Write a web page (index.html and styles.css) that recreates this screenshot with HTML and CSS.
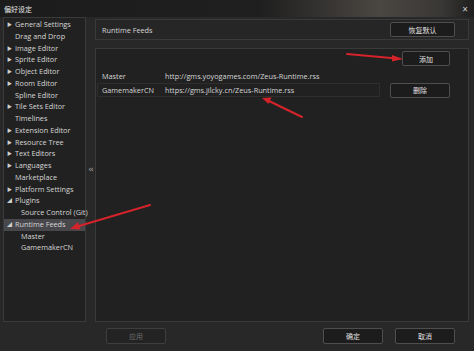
FILE: index.html
```html
<!DOCTYPE html>
<html lang="zh">
<head>
  <meta charset="UTF-8" />
  <title>偏好设定</title>
  <link rel="stylesheet" href="styles.css">
</head>
<body>
  <div class="window">
    <div class="titlebar">
      <span class="title">偏好设定</span>
      <span class="close">×</span>
    </div>

    <div class="main">
      <div class="sidebar">
        <div class="item"><span class="tri">▶</span>General Settings</div>
        <div class="item">Drag and Drop</div>
        <div class="item"><span class="tri">▶</span>Image Editor</div>
        <div class="item"><span class="tri">▶</span>Sprite Editor</div>
        <div class="item"><span class="tri">▶</span>Object Editor</div>
        <div class="item"><span class="tri">▶</span>Room Editor</div>
        <div class="item">Spline Editor</div>
        <div class="item"><span class="tri">▶</span>Tile Sets Editor</div>
        <div class="item">Timelines</div>
        <div class="item"><span class="tri">▶</span>Extension Editor</div>
        <div class="item"><span class="tri">▶</span>Resource Tree</div>
        <div class="item"><span class="tri">▶</span>Text Editors</div>
        <div class="item"><span class="tri">▶</span>Languages</div>
        <div class="item">Marketplace</div>
        <div class="item"><span class="tri">▶</span>Platform Settings</div>
        <div class="item"><span class="tri">◢</span>Plugins</div>
        <div class="item child">Source Control (Git)</div>
        <div class="item selected"><span class="tri">◢</span>Runtime Feeds</div>
        <div class="item child">Master</div>
        <div class="item child">GamemakerCN</div>
      </div>

      <div class="splitter">‹‹</div>

      <div class="content">
        <div class="header">
          <span>Runtime Feeds</span>
          <button class="btn btn-reset">恢复默认</button>
        </div>
        <div class="feeds">
          <div class="add-row">
            <button class="btn btn-add">添加</button>
          </div>
          <div class="feed-row">
            <div class="feed-cells">
              <span class="feed-name">Master</span>
              <span class="feed-url">http://gms.yoyogames.com/Zeus-Runtime.rss</span>
            </div>
          </div>
          <div class="feed-row">
            <div class="feed-cells boxed">
              <span class="feed-name">GamemakerCN</span>
              <span class="feed-url">https://gms.jilcky.cn/Zeus-Runtime.rss</span>
            </div>
            <button class="btn btn-del">删除</button>
          </div>
        </div>
      </div>
    </div>

    <div class="footer">
      <button class="btn btn-foot disabled">应用</button>
      <button class="btn btn-foot ok">确定</button>
      <button class="btn btn-foot">取消</button>
    </div>

    <svg class="arrows" viewBox="0 0 474 351" xmlns="http://www.w3.org/2000/svg">
      <g stroke="#d4232a" stroke-width="2" stroke-linecap="round" fill="#d4232a">
        <line x1="347" y1="54" x2="394" y2="58.3"></line>
        <polygon points="403,59 392,55 392,61.5" stroke="none"></polygon>
        <line x1="302" y1="117" x2="269" y2="101"></line>
        <polygon points="262,98 271.5,97.5 268.5,104" stroke="none"></polygon>
        <line x1="150" y1="205" x2="79" y2="226"></line>
        <polygon points="70,229 78,222 80.5,229.5" stroke="none"></polygon>
      </g>
    </svg>
  </div>
</body>
</html>
```

FILE: styles.css
```css
:root {
  --win-bg: #282828;
  --panel-bg: #212121;
  --border: #3a3a3a;
  --text: #d6d6d6;
  --text-dim: #6a6a6a;
}

body {
  margin: 0;
  background: var(--win-bg);
  font-family: 'Open Sans', 'Noto Sans CJK SC', sans-serif;
  font-size: 7.3px;
  color: var(--text);
}

.window {
  position: relative;
  width: 474px;
  height: 351px;
  display: flex;
  flex-direction: column;
  background: var(--win-bg);
  overflow: hidden;
}

.titlebar {
  height: 17px;
  display: flex;
  align-items: center;
  justify-content: space-between;
  padding: 0 6px 0 4px;
  background: linear-gradient(90deg, #1c1c1c 0%, #1f1f1f 55%, #4a4642 80%, #3a3836 93%, #1e1e1e 100%);
  box-sizing: border-box;
}

.title {
  font-size: 7px;
  color: #e8e8e8;
  font-family: 'Noto Sans CJK SC', sans-serif;
}

.close {
  font-size: 10px;
  color: #cfcfcf;
}

.main {
  height: 305px;
  display: flex;
  padding: 0 5px 0 3px;
}

.sidebar {
  width: 83px;
  flex-shrink: 0;
  background: var(--panel-bg);
  border: 1px solid var(--border);
  box-sizing: border-box;
  padding-top: 1px;
}

.item {
  height: 11.75px;
  line-height: 11.75px;
  padding-left: 11px;
  white-space: nowrap;
  position: relative;
}

.item .tri {
  position: absolute;
  left: 3px;
  font-size: 5px;
  color: #cfcfcf;
}

.item.child {
  padding-left: 17px;
}

.item.selected {
  background: #47474c;
}

.splitter {
  width: 9px;
  flex-shrink: 0;
  display: flex;
  align-items: center;
  justify-content: center;
  font-family: 'DejaVu Sans', sans-serif;
  font-size: 8px;
  letter-spacing: -1px;
  color: #b0b0b0;
}

.content {
  flex: 1;
  display: flex;
  flex-direction: column;
  gap: 8px;
  padding-top: 2px;
}

.header {
  height: 21px;
  display: flex;
  align-items: center;
  justify-content: space-between;
  padding: 0 13px 0 6px;
  border: 1px solid var(--border);
  background: #262626;
  box-sizing: border-box;
}

.feeds {
  flex: 1;
  background: var(--panel-bg);
  border: 1px solid var(--border);
  padding: 2px 18px 0 1px;
}

.btn {
  height: 15px;
  padding: 0;
  background: #1c1c1c;
  border: 1px solid #4e4e4e;
  border-radius: 2px;
  color: #e0e0e0;
  font-family: 'Noto Sans CJK SC', sans-serif;
  font-size: 7px;
  box-sizing: border-box;
}

.btn-reset {
  width: 65px;
}

.add-row {
  display: flex;
  justify-content: flex-end;
  margin-bottom: 3px;
}

.btn-add {
  width: 48px;
}

.feed-row {
  height: 14px;
  display: flex;
  align-items: center;
  gap: 10px;
}

.feed-cells {
  width: 283px;
  height: 14px;
  display: flex;
  align-items: center;
  padding-left: 5px;
  box-sizing: border-box;
  white-space: nowrap;
}

.feed-cells.boxed {
  border: 1px solid #2e2e2e;
  padding-left: 4px;
}

.feed-name {
  width: 63px;
}

.btn-del {
  width: 60px;
  margin-right: -1px;
}

.footer {
  flex: 1;
  display: flex;
  align-items: center;
  padding: 0 19px 2px 106px;
  gap: 12px;
}

.btn-foot {
  width: 60px;
  height: 16px;
}

.btn-foot.disabled {
  color: var(--text-dim);
  border-color: #3e3e3e;
  background: #232323;
}

.btn-foot.ok {
  margin-left: auto;
}

.arrows {
  position: absolute;
  left: 0;
  top: 0;
  width: 474px;
  height: 351px;
  pointer-events: none;
}
```
